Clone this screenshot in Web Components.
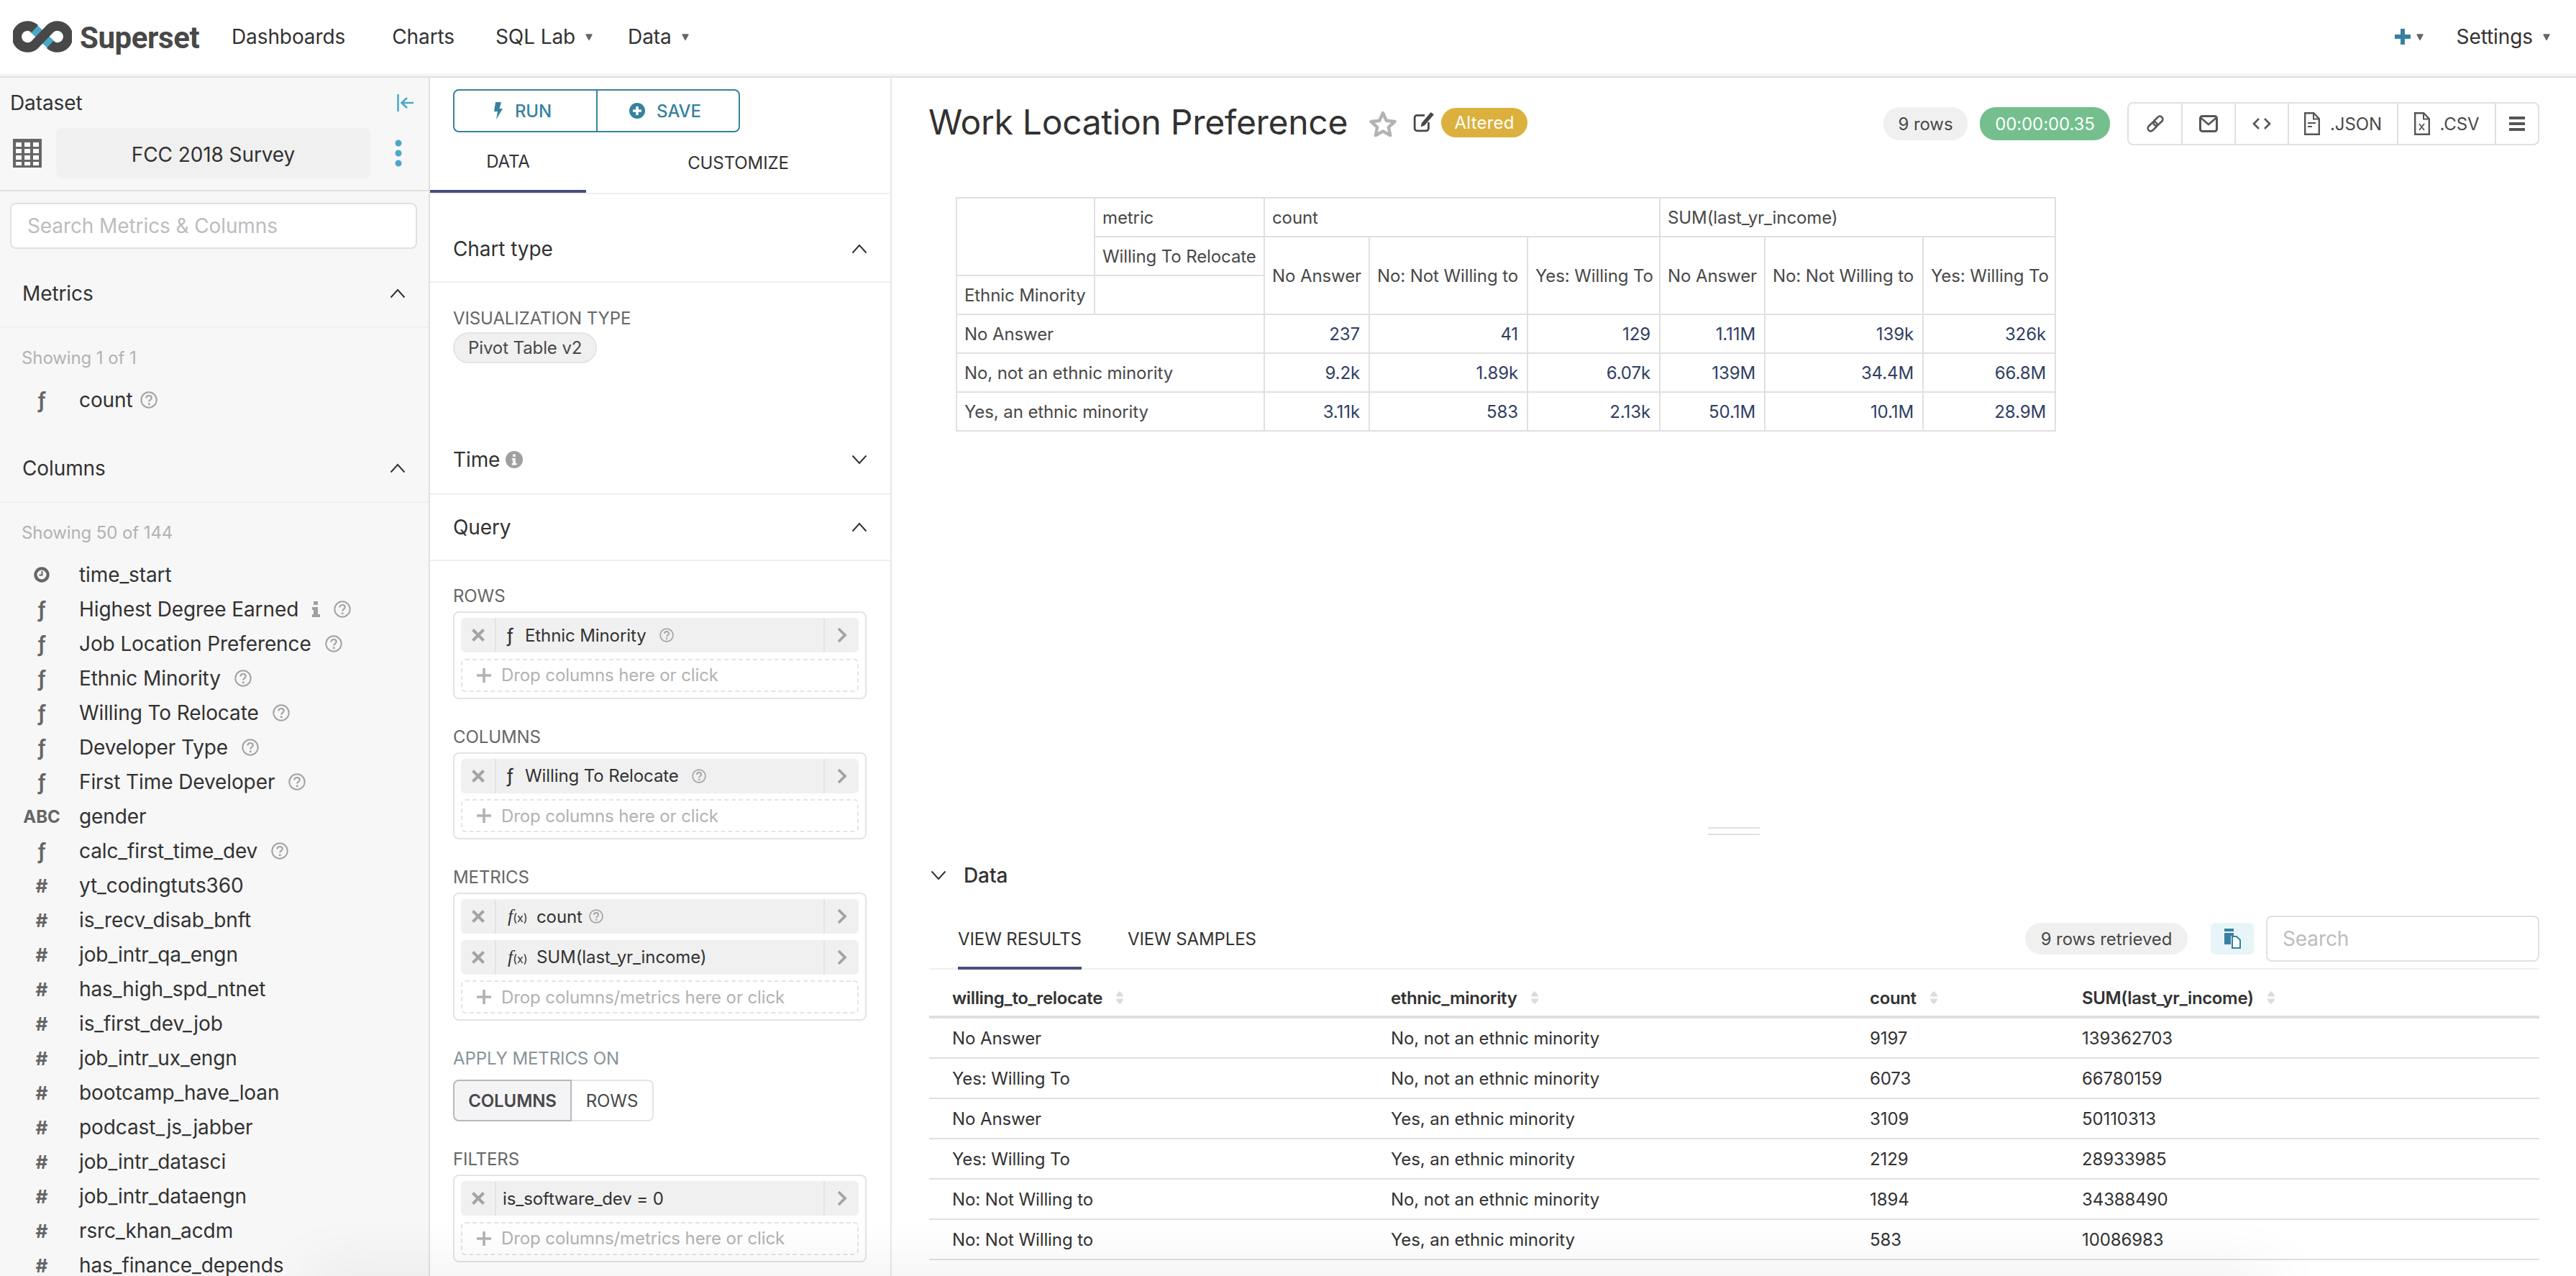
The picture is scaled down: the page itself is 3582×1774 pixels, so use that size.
<!DOCTYPE html>
<html>
<head>
<meta charset="utf-8">
<title>Superset</title>
<style>
  html, body { margin: 0; padding: 0; height: 1774px; overflow: hidden; background: #fff; }
  body { font-family: Inter, "Liberation Sans", sans-serif; color: #323232; font-size: 28px; letter-spacing: -0.1px; }
</style>
</head>
<body>
<ss-app></ss-app>
<script>
const ICON = {
  caret: '<svg width="10" height="11" viewBox="0 0 10 11"><path d="M1 2h8L5 9.500z" fill="#666" stroke="#666" stroke-width="1.400" stroke-linejoin="round"/></svg>',
  up: '<svg width="22" height="14" viewBox="0 0 22 14"><path d="M1.500 12.500L11 2l9.500 10.500" fill="none" stroke="#323232" stroke-width="2"/></svg>',
  down: '<svg width="22" height="14" viewBox="0 0 22 14"><path d="M1.500 1.500L11 12l9.500-10.500" fill="none" stroke="#323232" stroke-width="2"/></svg>',
  help: s => `<svg width="${s}" height="${s}" viewBox="0 0 24 24"><circle cx="12" cy="12" r="10.700" fill="none" stroke="#a3a3a3" stroke-width="2"/><path d="M8.400 9.600c0-2.200 1.600-3.600 3.700-3.600s3.600 1.300 3.600 3.200c0 2.700-3.500 2.800-3.500 5.400" fill="none" stroke="#a3a3a3" stroke-width="2.200"/><circle cx="12.200" cy="17.800" r="1.500" fill="#a3a3a3"/></svg>`,
  info: '<svg width="14" height="22" viewBox="0 0 14 22"><path d="M3 0h6v5H3zM1 8h8v10h3v4H1v-4h2v-6H1z" fill="#a0a0a0"/></svg>',
  infoFill: '<svg width="24" height="24" viewBox="0 0 24 24"><circle cx="12" cy="12" r="12" fill="#a0a0a0"/><path d="M10.200 4.500h3.600v3.400h-3.600zM8.800 10h5v7h1.600v2.600H8.800V17h1.400v-4.400H8.800z" fill="#fff"/></svg>',
  clock: '<svg width="22" height="22" viewBox="0 0 22 22"><circle cx="11" cy="11" r="8.600" fill="none" stroke="#666" stroke-width="4.200"/><path d="M11.500 6v5.500H7.500" fill="none" stroke="#666" stroke-width="2"/></svg>',
  sort: '<svg width="12" height="20" viewBox="0 0 12 20"><path d="M6 1c3 2.500 5 5 5 7.500H1C1 6 3 3.500 6 1zM6 19c3-2.500 5-5 5-7.500H1C1 14 3 16.500 6 19z" fill="#dcdcdc"/></svg>'
};

class SsBrand extends HTMLElement {
  constructor() {
    super();
    this.attachShadow({ mode: 'open' });
    this.shadowRoot.innerHTML = `
      <style>
        :host { display: flex; align-items: center; margin-left: 18px; width: 252px; height: 44px; color: #484848; }
        svg { flex: none; }
        span { font-family: Roboto, "Liberation Sans", sans-serif; font-weight: 700; font-size: 42px; letter-spacing: -0.4px; margin-left: 11px; line-height: 44px; position: relative; top: 2px; }
      </style>
      <svg width="82" height="44" viewBox="0 0 82 44">
        <path d="M26 8L56 36" fill="none" stroke="#4aa7c9" stroke-width="13.500"/>
        <path d="M30.500 11A15 15 0 1 0 30.500 33L51.500 11A15 15 0 1 1 51.500 33" fill="none" stroke="#484848" stroke-width="13.500"/>
      </svg>
      <span>Superset</span>`;
  }
}
customElements.define('ss-brand', SsBrand);

class SsNavLink extends HTMLElement {
  constructor() {
    super();
    this.attachShadow({ mode: 'open' });
    this.shadowRoot.innerHTML = `
      <style>
        :host { display: inline-flex; align-items: center; gap: 14px; font-size: 28px; color: #323232; white-space: nowrap; }
      </style>
      <slot></slot>${this.hasAttribute('caret') ? ICON.caret : ''}`;
  }
}
customElements.define('ss-nav-link', SsNavLink);

class SsHeader extends HTMLElement {
  constructor() {
    super();
    this.attachShadow({ mode: 'open' });
    this.shadowRoot.innerHTML = `
      <style>
        :host { display: flex; align-items: center; height: 102px; box-sizing: content-box; border-bottom: 2px solid #e0e0e0; box-shadow: inset 0 -4px 0 #f5f5f5; padding-bottom: 4px; }
        .left { display: flex; align-items: center; margin-left: 52px; }
        .left ss-nav-link:nth-child(2) { margin-left: 65px; }
        .left ss-nav-link:nth-child(3) { margin-left: 57px; }
        .left ss-nav-link:nth-child(4) { margin-left: 49px; }
        .right { display: flex; align-items: center; margin-left: auto; margin-right: 36px; gap: 46px; }
        .add { display: flex; align-items: center; gap: 8px; }
      </style>
      <ss-brand></ss-brand>
      <div class="left">
        <ss-nav-link>Dashboards</ss-nav-link>
        <ss-nav-link>Charts</ss-nav-link>
        <ss-nav-link caret>SQL Lab</ss-nav-link>
        <ss-nav-link caret>Data</ss-nav-link>
      </div>
      <div class="right">
        <div class="add">
          <svg width="22" height="22" viewBox="0 0 22 22"><path d="M11 0v22M0 11h22" stroke="#37819f" stroke-width="6"/></svg>
          ${ICON.caret}
        </div>
        <ss-nav-link caret>Settings</ss-nav-link>
      </div>`;
  }
}
customElements.define('ss-header', SsHeader);

class SsField extends HTMLElement {
  constructor() {
    super();
    this.attachShadow({ mode: 'open' });
    const type = this.getAttribute('type') || 'num';
    const glyph = {
      fx: '<b class="fx">ƒ</b>',
      num: '<b class="num">#</b>',
      abc: '<b class="abc">ABC</b>',
      time: ICON.clock
    }[type];
    const help = this.getAttribute('help');
    this.shadowRoot.innerHTML = `
      <style>
        :host { display: flex; align-items: center; height: 48px; font-size: 28px; color: #323232; white-space: nowrap; }
        .ic { width: 56px; margin-left: 30px; margin-right: 24px; display: flex; justify-content: center; align-items: center; color: #666; flex: none; }
        .fx { font-size: 30px; font-weight: 600; font-family: Inter, sans-serif; }
        .num { font-size: 26px; font-weight: 700; }
        .abc { font-size: 24px; font-weight: 700; }
        .i { margin-left: 18px; display: flex; }
        .h { display: flex; margin-left: ${help === 'tight' ? 10 : 19}px; }
        .i + .h { margin-left: 17px; }
      </style>
      <span class="ic">${glyph}</span>
      <slot></slot>
      ${this.hasAttribute('info') ? `<span class="i">${ICON.info}</span>` : ''}
      ${help !== null ? `<span class="h">${ICON.help(24)}</span>` : ''}`;
  }
}
customElements.define('ss-field', SsField);

class SsPanelSection extends HTMLElement {
  constructor() {
    super();
    this.attachShadow({ mode: 'open' });
    this.shadowRoot.innerHTML = `
      <style>
        :host { display: block; }
        .head { display: flex; align-items: center; justify-content: space-between; box-sizing: border-box; height: 94px; padding: 0 32px 0 31px; border-bottom: 2px solid #f0f0f0; font-size: 28px; color: #323232; }
        .note { font-size: 24px; color: #b2b2b2; height: 48px; line-height: 48px; padding-left: 30px; margin: 18px 0 10px; }
      </style>
      <div class="head"><span>${this.getAttribute('label')}</span>${ICON.up}</div>
      <div class="note">${this.getAttribute('note')}</div>
      <slot></slot>`;
  }
}
customElements.define('ss-panel-section', SsPanelSection);

class SsDatasourcePanel extends HTMLElement {
  constructor() {
    super();
    this.attachShadow({ mode: 'open' });
    const cols = [
      ['time', 'time_start'],
      ['fx', 'Highest Degree Earned', 1, 1],
      ['fx', 'Job Location Preference', 1],
      ['fx', 'Ethnic Minority', 1],
      ['fx', 'Willing To Relocate', 1],
      ['fx', 'Developer Type', 1],
      ['fx', 'First Time Developer', 1],
      ['abc', 'gender'],
      ['fx', 'calc_first_time_dev', 1],
      ['num', 'yt_codingtuts360'],
      ['num', 'is_recv_disab_bnft'],
      ['num', 'job_intr_qa_engn'],
      ['num', 'has_high_spd_ntnet'],
      ['num', 'is_first_dev_job'],
      ['num', 'job_intr_ux_engn'],
      ['num', 'bootcamp_have_loan'],
      ['num', 'podcast_js_jabber'],
      ['num', 'job_intr_datasci'],
      ['num', 'job_intr_dataengn'],
      ['num', 'rsrc_khan_acdm'],
      ['num', 'has_finance_depends']
    ];
    this.shadowRoot.innerHTML = `
      <style>
        :host { display: block; width: 598px; flex: none; box-sizing: border-box; background: #f7f7f7; border-right: 2px solid #e0e0e0; overflow: hidden; }
        .top { height: 156px; box-sizing: content-box; border-bottom: 2px solid #e0e0e0; }
        .title { display: flex; align-items: center; justify-content: space-between; height: 70px; padding: 0 20px 0 14px; box-sizing: border-box; font-size: 28px; }
        .source { display: flex; align-items: center; height: 70px; padding-left: 18px; }
        .name { width: 437px; height: 70px; margin-left: 20px; border-radius: 8px; background: #f0f0f0; display: flex; align-items: center; justify-content: center; font-size: 28px; padding-top: 3px; box-sizing: border-box; }
        .dots { margin-left: 34px; display: flex; }
        .search { display: block; box-sizing: border-box; margin: 16px 16px 16px 14px; width: 566px; height: 64px; border: 2px solid #e0e0e8; border-radius: 8px; background: #fff; font-size: 28px; color: #bdbdbd; line-height: 60px; padding-left: 22px; }
        .cols { margin-top: 25px; }
      </style>
      <div class="top">
        <div class="title"><span>Dataset</span>
          <svg width="24" height="24" viewBox="0 0 24 24"><path d="M1.500 0v24" stroke="#4aa7c9" stroke-width="2.500"/><path d="M23 12H8M14 5l-7.500 7 7.500 7" fill="none" stroke="#4aa7c9" stroke-width="2.500"/></svg>
        </div>
        <div class="source">
          <svg width="40" height="40" viewBox="0 0 40 40"><path fill="#666" d="M0 0h40v40H0z"/><path fill="#fff" d="M4 5h8v6H4zM16 5h8v6h-8zM28 5h8v6h-8zM4 14h8v6H4zM16 14h8v6h-8zM28 14h8v6h-8zM4 23h8v6H4zM16 23h8v6h-8zM28 23h8v6h-8zM4 32h8v5H4zM16 32h8v5h-8zM28 32h8v5h-8z"/></svg>
          <div class="name">FCC 2018 Survey</div>
          <span class="dots"><svg width="10" height="38" viewBox="0 0 10 38"><g fill="#4aa7c9"><circle cx="5" cy="5" r="4.500"/><circle cx="5" cy="19" r="4.500"/><circle cx="5" cy="33" r="4.500"/></g></svg></span>
        </div>
      </div>
      <div class="search">Search Metrics &amp; Columns</div>
      <ss-panel-section label="Metrics" note="Showing 1 of 1">
        <ss-field type="fx" help="tight">count</ss-field>
      </ss-panel-section>
      <ss-panel-section class="cols" label="Columns" note="Showing 50 of 144">
        ${cols.map(c => `<ss-field type="${c[0]}"${c[3] ? ' info' : ''}${c[2] ? ' help' : ''}>${c[1]}</ss-field>`).join('')}
      </ss-panel-section>`;
  }
}
customElements.define('ss-datasource-panel', SsDatasourcePanel);

class SsCollapse extends HTMLElement {
  constructor() {
    super();
    this.attachShadow({ mode: 'open' });
    const open = this.hasAttribute('open');
    const tall = this.hasAttribute('tall');
    this.shadowRoot.innerHTML = `
      <style>
        :host { display: block; }
        .head { display: flex; align-items: center; gap: 8px; box-sizing: border-box; height: ${tall ? 94 : 92}px; padding: 0 32px ${tall ? 2 : 0}px; border-bottom: 2px solid #f0f0f0; font-size: 28px; color: #323232; }
        .head svg:last-child { margin-left: auto; }
        .i { display: flex; }
      </style>
      <div class="head"><span>${this.getAttribute('label')}</span>${this.hasAttribute('info') ? `<span class="i">${ICON.infoFill}</span>` : ''}${open ? ICON.up : ICON.down}</div>
      <slot></slot>`;
  }
}
customElements.define('ss-collapse', SsCollapse);

class SsPill extends HTMLElement {
  constructor() {
    super();
    this.attachShadow({ mode: 'open' });
    const kind = this.getAttribute('kind');
    const lead = {
      fx: '<span class="fx">ƒ</span>',
      metric: '<span class="fm"><i>f</i><small>(x)</small></span>'
    }[kind] || '';
    const help = this.hasAttribute('help') ? `<span class="h${kind === 'metric' ? ' t' : ''}">${ICON.help(20)}</span>` : '';
    this.shadowRoot.innerHTML = `
      <style>
        :host { display: flex; height: 48px; background: #f0f0f0; border-radius: 6px; font-size: 24px; color: #323232; align-items: stretch; }
        .x { width: 47px; flex: none; display: flex; align-items: center; justify-content: center; border-right: 2px solid #e4e4e4; }
        .m { flex: 1; display: flex; align-items: center; padding-left: ${kind === 'fx' ? 14 : kind ? 16 : 9}px; white-space: nowrap; }
        .c { width: 47px; flex: none; display: flex; align-items: center; justify-content: center; border-left: 2px solid #e4e4e4; }
        .fx { font-family: Inter, sans-serif; font-size: 27px; width: 26px; }
        .fm { display: inline-block; width: 40px; font-family: "Liberation Serif", serif; font-size: 26px; white-space: nowrap; letter-spacing: 0; }
        .fm small { font-family: Inter, sans-serif; font-size: 16px; }
        .h { display: flex; margin-left: 18px; }
        .h.t { margin-left: 9px; }
      </style>
      <span class="x"><svg width="18" height="18" viewBox="0 0 18 18"><path d="M1.500 1.500l15 15M16.500 1.500l-15 15" stroke="#a3a3a3" stroke-width="4"/></svg></span>
      <span class="m">${lead}<slot></slot>${help}</span>
      <span class="c"><svg width="14" height="22" viewBox="0 0 14 22"><path d="M2 2l9 9-9 9" fill="none" stroke="#a3a3a3" stroke-width="3.800"/></svg></span>`;
  }
}
customElements.define('ss-pill', SsPill);

class SsDndBox extends HTMLElement {
  constructor() {
    super();
    this.attachShadow({ mode: 'open' });
    this.shadowRoot.innerHTML = `
      <style>
        :host { display: block; margin-bottom: 37px; }
        .label { height: 32px; line-height: 32px; font-size: 24px; color: #666; margin-bottom: 5px; }
        .box { display: flex; flex-direction: column; gap: 8.500px; box-sizing: border-box; width: 575px; padding: 7px 9px 8px; border: 2px solid #e4e4e4; border-radius: 8px; }
        .drop { display: flex; align-items: center; height: 46px; box-sizing: border-box; border: 2px dashed #e4e4e4; border-radius: 6px; padding-left: 20px; font-size: 24px; color: #b2b2b2; gap: 14px; }
      </style>
      <div class="label">${this.getAttribute('label')}</div>
      <div class="box">
        <slot></slot>
        <div class="drop"><svg width="20" height="20" viewBox="0 0 20 20"><path d="M10 0v20M0 10h20" stroke="#b2b2b2" stroke-width="3.600"/></svg>${this.getAttribute('hint')}</div>
      </div>`;
  }
}
customElements.define('ss-dnd-box', SsDndBox);

class SsRunSave extends HTMLElement {
  constructor() {
    super();
    this.attachShadow({ mode: 'open' });
    this.shadowRoot.innerHTML = `
      <style>
        :host { display: flex; box-sizing: border-box; width: 399px; height: 60px; border: 2px solid #37819f; border-radius: 8px; color: #37819f; font-size: 24px; font-weight: 500; }
        div { display: flex; align-items: center; gap: 16px; justify-content: center; box-sizing: border-box; padding-right: 8px; }
        .r { width: 199px; border-right: 2px solid #37819f; }
        .s { flex: 1; }
      </style>
      <div class="r"><svg width="14" height="24" viewBox="0 0 14 24"><path d="M3 0h8L8.500 9H13L4 24l2-11H1z" fill="#37819f"/></svg>RUN</div>
      <div class="s"><svg width="22" height="22" viewBox="0 0 22 22"><circle cx="11" cy="11" r="11" fill="#37819f"/><path d="M11 5v12M5 11h12" stroke="#fff" stroke-width="3.500"/></svg>SAVE</div>`;
  }
}
customElements.define('ss-run-save', SsRunSave);

class SsControlPanel extends HTMLElement {
  constructor() {
    super();
    this.attachShadow({ mode: 'open' });
    this.shadowRoot.innerHTML = `
      <style>
        :host { display: block; width: 642px; flex: none; box-sizing: border-box; border-right: 2px solid #e8e8e8; overflow: hidden; }
        .bar { padding: 16px 0 0 32px; }
        .tabs { display: flex; height: 84px; border-bottom: 2px solid #f0f0f0; font-size: 24px; color: #323232; margin-bottom: 31px; }
        .tabs span { display: flex; align-items: center; justify-content: center; box-sizing: border-box; height: 84px; }
        .tabs .on { width: 217px; border-bottom: 4px solid #484f7e; }
        .tabs .off { flex: 1; }
        .viz { height: 201px; padding: 33px 32px 0; box-sizing: border-box; }
        .viz-label { height: 34px; line-height: 34px; font-size: 24px; color: #666; margin-bottom: 2px; }
        .tag { display: inline-flex; align-items: center; height: 43px; box-sizing: border-box; padding: 0 19px; background: #f0f0f0; border: 2px solid #e4e4e4; border-radius: 22px; font-size: 24px; color: #484848; }
        .query { padding: 33px 32px 0; }
        .apply { margin-bottom: 37px; }
        .apply .t { height: 32px; line-height: 32px; font-size: 24px; color: #879399; margin-bottom: 13px; }
        .seg { display: flex; width: 279px; height: 58px; font-size: 24px; box-sizing: border-box; }
        .seg span { display: flex; align-items: center; justify-content: center; box-sizing: border-box; }
        .seg .a { width: 165px; background: #f4f4f7; border: 2px solid #b8b8b8; border-radius: 8px 0 0 8px; font-weight: 600; color: #484848; }
        .seg .b { flex: 1; border: 2px solid #e4e4e4; border-left: 0; border-radius: 0 8px 8px 0; color: #484848; }
      </style>
      <div class="bar"><ss-run-save></ss-run-save></div>
      <div class="tabs"><span class="on">DATA</span><span class="off">CUSTOMIZE</span></div>
      <ss-collapse label="Chart type" open>
        <div class="viz">
          <div class="viz-label">VISUALIZATION TYPE</div>
          <span class="tag">Pivot Table v2</span>
        </div>
      </ss-collapse>
      <ss-collapse label="Time" info tall></ss-collapse>
      <ss-collapse label="Query" open>
        <div class="query">
          <ss-dnd-box label="ROWS" hint="Drop columns here or click">
            <ss-pill kind="fx" help>Ethnic Minority</ss-pill>
          </ss-dnd-box>
          <ss-dnd-box label="COLUMNS" hint="Drop columns here or click">
            <ss-pill kind="fx" help>Willing To Relocate</ss-pill>
          </ss-dnd-box>
          <ss-dnd-box label="METRICS" hint="Drop columns/metrics here or click">
            <ss-pill kind="metric" help>count</ss-pill>
            <ss-pill kind="metric">SUM(last_yr_income)</ss-pill>
          </ss-dnd-box>
          <div class="apply">
            <div class="t">APPLY METRICS ON</div>
            <div class="seg"><span class="a">COLUMNS</span><span class="b">ROWS</span></div>
          </div>
          <ss-dnd-box label="FILTERS" hint="Drop columns/metrics here or click">
            <ss-pill>is_software_dev = 0</ss-pill>
          </ss-dnd-box>
        </div>
      </ss-collapse>`;
  }
}
customElements.define('ss-control-panel', SsControlPanel);

class SsChartHead extends HTMLElement {
  constructor() {
    super();
    this.attachShadow({ mode: 'open' });
    this.shadowRoot.innerHTML = `
      <style>
        :host { display: flex; align-items: center; height: 60px; margin: 34px 51px 0; }
        h1 { margin: 0 0 4px; font-size: 48px; font-weight: 400; letter-spacing: -0.3px; color: #323232; white-space: nowrap; line-height: 60px; }
        .star { margin: 0 23px 0 30px; display: flex; }
        .edit { display: flex; margin: 0 9px 4px 0; }
        .pill { display: inline-flex; align-items: center; justify-content: center; border-radius: 22px; font-size: 24px; white-space: nowrap; box-sizing: border-box; }
        .alt { width: 120px; height: 41px; background: #dcb03d; color: #fff; margin-bottom: 4px; letter-spacing: 0.2px; }
        .rows { width: 117px; height: 46px; background: #f0f0f0; color: #484848; margin-left: auto; }
        .time { width: 181px; height: 46px; background: #74bf8d; color: #fff; margin: 0 24px 0 17px; }
        .tools { display: flex; box-sizing: border-box; width: 573px; height: 60px; border: 2px solid #e0e0e0; border-radius: 8px; color: #484848; font-size: 24px; }
        .tools span { display: flex; align-items: center; justify-content: center; gap: 14px; box-sizing: border-box; border-right: 2px solid #e0e0e0; }
        .tools span:last-child { border-right: 0; flex: 1; }
      </style>
      <h1>Work Location Preference</h1>
      <span class="star"><svg width="38" height="36" viewBox="0 0 38 36"><path d="M19 3l4.800 10.800 11.700 1.200-8.700 7.900 2.500 11.500L19 28.500 8.700 34.400l2.500-11.500L2.500 15l11.700-1.200z" fill="none" stroke="#b3b3b3" stroke-width="4.400" stroke-linejoin="round"/></svg></span>
      <span class="edit"><svg width="30" height="30" viewBox="0 0 28 28"><path d="M20 14v8a3 3 0 0 1-3 3H5a3 3 0 0 1-3-3V8a3 3 0 0 1 3-3h10" fill="none" stroke="#484848" stroke-width="2.600"/><path d="M23 1l4 3-12 14-5 2 1-5z" fill="#484848"/></svg></span>
      <span class="pill alt">Altered</span>
      <span class="pill rows">9 rows</span>
      <span class="pill time">00:00:00.35</span>
      <div class="tools">
        <span style="width:75px"><svg width="26" height="26" viewBox="0 0 26 26"><g transform="rotate(-45 13 13)" fill="none" stroke="#555" stroke-width="2.600"><rect x="0" y="9" width="15" height="8" rx="4"/><rect x="11" y="9" width="15" height="8" rx="4"/></g></svg></span>
        <span style="width:74px"><svg width="26" height="24" viewBox="0 0 26 24"><rect x="1.500" y="1.500" width="23" height="21" rx="3" fill="none" stroke="#555" stroke-width="3"/><path d="M2.500 4l10.500 9 10.500-9" fill="none" stroke="#555" stroke-width="2.600"/></svg></span>
        <span style="width:74px"><svg width="26" height="18" viewBox="0 0 26 18"><path d="M9 2L2 9l7 7M17 2l7 7-7 7" fill="none" stroke="#555" stroke-width="2.600"/></svg></span>
        <span style="width:152px"><svg width="22" height="32" viewBox="0 0 22 32"><path d="M1.200 1.200h12l7.600 8v21.600H1.200z" fill="none" stroke="#555" stroke-width="2.400"/><path d="M13 1.500v8h8" fill="none" stroke="#555" stroke-width="2"/><path d="M5 15h11M5 20h6" stroke="#555" stroke-width="2"/></svg>.JSON</span>
        <span style="width:136px"><svg width="22" height="32" viewBox="0 0 22 32"><path d="M1.200 1.200h12l7.600 8v21.600H1.200z" fill="none" stroke="#555" stroke-width="2.400"/><path d="M13 1.500v8h8" fill="none" stroke="#555" stroke-width="2"/><path d="M7 16l7 9M14 16l-7 9" stroke="#555" stroke-width="1.800"/></svg>.CSV</span>
        <span><svg width="22" height="20" viewBox="0 0 22 20"><path d="M0 2h22M0 10h22M0 18h22" stroke="#555" stroke-width="3.800"/></svg></span>
      </div>`;
  }
}
customElements.define('ss-chart-head', SsChartHead);

class SsPivot extends HTMLElement {
  constructor() {
    super();
    this.attachShadow({ mode: 'open' });
    const rows = [
      ['No Answer', '237', '41', '129', '1.11M', '139k', '326k'],
      ['No, not an ethnic minority', '9.2k', '1.89k', '6.07k', '139M', '34.4M', '66.8M'],
      ['Yes, an ethnic minority', '3.11k', '583', '2.13k', '50.1M', '10.1M', '28.9M']
    ];
    const sub = ['No Answer', 'No: Not Willing to', 'Yes: Willing To', 'No Answer', 'No: Not Willing to', 'Yes: Willing To'];
    this.shadowRoot.innerHTML = `
      <style>
        :host { display: block; margin: 72px 0 0 89px; height: 876px; box-sizing: border-box; }
        table { border-collapse: collapse; table-layout: fixed; width: 1528px; font-size: 24px; color: #484848; }
        th, td { border: 2px solid #e0e0e0; height: 54px; padding: 0 10px; font-weight: 400; text-align: left; white-space: nowrap; box-sizing: border-box; overflow: hidden; }
        td.v { text-align: right; color: #2f3e63; padding-right: 12px; }
      </style>
      <table>
        <colgroup><col style="width:192px"><col style="width:236px"><col style="width:146px"><col style="width:220px"><col style="width:184px"><col style="width:146px"><col style="width:220px"><col style="width:184px"></colgroup>
        <tr><th rowspan="2"></th><th>metric</th><th colspan="3">count</th><th colspan="3">SUM(last_yr_income)</th></tr>
        <tr><th>Willing To Relocate</th>${sub.map(s => `<th rowspan="2">${s}</th>`).join('')}</tr>
        <tr><th>Ethnic Minority</th><th></th></tr>
        ${rows.map(r => `<tr><td colspan="2">${r[0]}</td>${r.slice(1).map(v => `<td class="v">${v}</td>`).join('')}</tr>`).join('')}
      </table>`;
  }
}
customElements.define('ss-pivot', SsPivot);

class SsResults extends HTMLElement {
  constructor() {
    super();
    this.attachShadow({ mode: 'open' });
    const rows = [
      ['No Answer', 'No, not an ethnic minority', '9197', '139362703'],
      ['Yes: Willing To', 'No, not an ethnic minority', '6073', '66780159'],
      ['No Answer', 'Yes, an ethnic minority', '3109', '50110313'],
      ['Yes: Willing To', 'Yes, an ethnic minority', '2129', '28933985'],
      ['No: Not Willing to', 'No, not an ethnic minority', '1894', '34388490'],
      ['No: Not Willing to', 'Yes, an ethnic minority', '583', '10086983']
    ];
    const heads = ['willing_to_relocate', 'ethnic_minority', 'count', 'SUM(last_yr_income)'];
    this.shadowRoot.innerHTML = `
      <style>
        :host { display: block; margin: 0 51px 0 52px; }
        .grip { width: 72px; height: 11px; margin: 0 auto; border-top: 2px solid #e0e0e0; border-bottom: 2px solid #e0e0e0; box-sizing: border-box; position: relative; left: -1px; }
        .title { display: flex; align-items: center; height: 56px; margin-top: 28px; gap: 24px; font-weight: 500; font-size: 28px; color: #323232; }
        .title svg { margin-left: 2px; }
        .bar { display: flex; align-items: center; height: 86px; margin-top: 17px; border-bottom: 2px solid #f0f0f0; box-sizing: border-box; font-size: 24px; color: #323232; }
        .tab { display: flex; align-items: center; box-sizing: border-box; height: 86px; padding-top: 4px; border-bottom: 4px solid transparent; margin-bottom: -2px; }
        .tab.on { margin-left: 40px; margin-right: 64px; border-color: #484f7e; }
        .count { margin-left: auto; display: flex; align-items: center; justify-content: center; width: 226px; height: 44px; border-radius: 22px; background: #f0f0f0; color: #484848; margin-top: 2px; }
        .copy { display: flex; align-items: center; justify-content: center; width: 60px; height: 44px; margin: 2px 17px 0 32px; border-radius: 6px; background: #e8f5f8; }
        .search { box-sizing: border-box; width: 380px; height: 64px; border: 2px solid #e0e0e8; border-radius: 8px; font-size: 28px; color: #bdbdbd; line-height: 60px; padding-left: 21px; margin-top: 2px; }
        .row { display: grid; grid-template-columns: 610px 666px 295px 1fr; padding-left: 32px; box-sizing: border-box; align-items: center; font-size: 24px; color: #323232; }
        .th { height: 68px; border-bottom: 4px solid #e0e0e0; font-weight: 600; letter-spacing: -0.35px; padding-top: 14px; }
        .th span { display: flex; align-items: center; gap: 18px; }
        .tr { height: 56px; border-bottom: 2px solid #e0e0e0; }
      </style>
      <div class="grip"></div>
      <div class="title"><svg width="22" height="14" viewBox="0 0 22 14"><path d="M1.500 1.500L11 12l9.500-10.500" fill="none" stroke="#323232" stroke-width="2"/></svg><span>Data</span></div>
      <div class="bar">
        <span class="tab on">VIEW RESULTS</span><span class="tab">VIEW SAMPLES</span>
        <span class="count">9 rows retrieved</span>
        <span class="copy"><svg width="24" height="28" viewBox="0 0 24 28"><path d="M1 0h13v4H1zM1 6h13v4h-4v12H1z" fill="#37819f"/><path d="M12 11h6l5 5v11H12z" fill="#fff" stroke="#37819f" stroke-width="2"/></svg></span>
        <span class="search">Search</span>
      </div>
      <div class="row th">${heads.map(h => `<span>${h}${ICON.sort}</span>`).join('')}</div>
      ${rows.map(r => `<div class="row tr">${r.map(c => `<span>${c}</span>`).join('')}</div>`).join('')}`;
  }
}
customElements.define('ss-results', SsResults);

class SsApp extends HTMLElement {
  constructor() {
    super();
    this.attachShadow({ mode: 'open' });
    this.shadowRoot.innerHTML = `
      <style>
        :host { display: block; height: 1774px; overflow: hidden; position: relative; }
        .body { display: flex; height: 1666px; overflow: hidden; }
        .main { flex: 1; min-width: 0; overflow: hidden; }
        .shade { position: absolute; left: 430px; width: 2730px; top: 1776px; height: 20px; box-shadow: 0 0 80px 0 rgba(0,0,0,.17); }
      </style>
      <ss-header></ss-header>
      <div class="body">
        <ss-datasource-panel></ss-datasource-panel>
        <ss-control-panel></ss-control-panel>
        <div class="main">
          <ss-chart-head></ss-chart-head>
          <ss-pivot></ss-pivot>
          <ss-results></ss-results>
        </div>
      </div>
      <div class="shade"></div>`;
  }
}
customElements.define('ss-app', SsApp);
</script>
</body>
</html>
